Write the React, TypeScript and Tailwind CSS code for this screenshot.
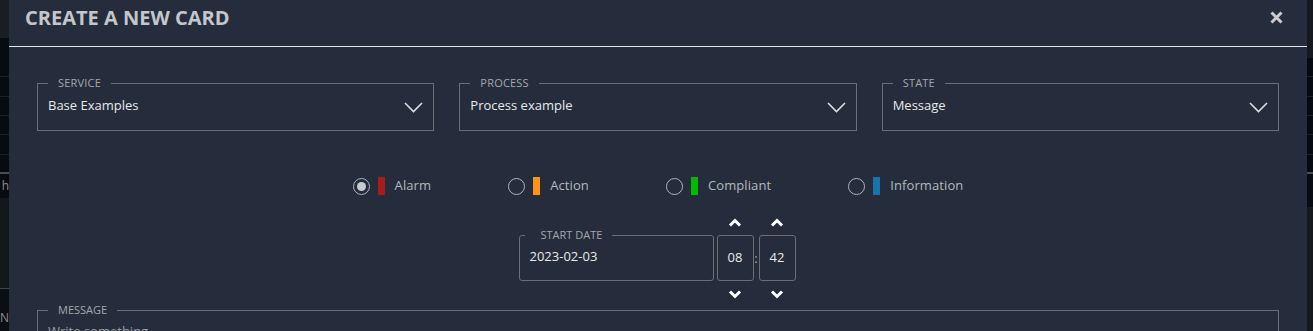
import React from "react";

const font = { fontFamily: '"Open Sans", "Noto Sans", sans-serif' };

function Chevron() {
  return (
    <svg width="19" height="11" viewBox="0 0 19 11" className="shrink-0 mt-[4px]">
      <polyline points="1,1 9.5,9.5 18,1" fill="none" stroke="#dcdde0" strokeWidth="1.6" />
    </svg>
  );
}

function SelectField({ label, value }: { label: string; value: string }) {
  return (
    <fieldset className="border border-[#6a6e75] pl-[10px] pr-[10px] pb-[10px] min-w-0">
      <legend className="px-[10px] text-[11px] leading-[14px] text-[#a3a7ad] tracking-[0.2px]">{label}</legend>
      <div className="h-[30px] flex items-center justify-between">
        <span className="text-[13px] text-[#e8e9eb] mt-[1px]">{value}</span>
        <Chevron />
      </div>
    </fieldset>
  );
}

function Radio({ checked, color, label }: { checked?: boolean; color: string; label: string }) {
  return (
    <div className="flex items-center h-[20px]">
      <div className="w-[17px] h-[17px] rounded-full border-[1.5px] border-[#b0b3b8] flex items-center justify-center">
        {checked && <div className="w-[9px] h-[9px] rounded-full bg-[#c9cbce]" />}
      </div>
      <div className="ml-[8px] w-[7px] h-[18px]" style={{ backgroundColor: color }} />
      <span className="ml-[10px] text-[13px] text-[#b4b8be] tracking-[0.1px]">{label}</span>
    </div>
  );
}

function ArrowUp() {
  return (
    <svg width="14" height="9" viewBox="0 0 14 9">
      <polyline points="2,7.5 7,2.5 12,7.5" fill="none" stroke="#ffffff" strokeWidth="3" />
    </svg>
  );
}

function ArrowDown() {
  return (
    <svg width="14" height="9" viewBox="0 0 14 9">
      <polyline points="2,1.5 7,6.5 12,1.5" fill="none" stroke="#ffffff" strokeWidth="3" />
    </svg>
  );
}

function TimeBox({ value }: { value: string }) {
  return (
    <div className="flex flex-col items-center w-[37px]">
      <div className="h-[24px] flex items-center justify-center pb-[1px]">
        <ArrowUp />
      </div>
      <div className="w-[37px] h-[46px] border border-[#6a6e75] rounded-[3px] flex items-center justify-center text-[13px] text-[#e8e9eb]">
        {value}
      </div>
      <div className="h-[24px] flex items-center justify-center pt-[2px]">
        <ArrowDown />
      </div>
    </div>
  );
}

function LeftStrip() {
  return (
    <div className="w-[9px] shrink-0 flex flex-col overflow-hidden">
      <div className="h-[38px] shrink-0 bg-[#1a1d23]" />
      <div className="h-[39px] shrink-0 bg-[#080b12] border-b border-[#1c2029]" />
      <div className="h-[20px] shrink-0 bg-[#080b12] border-b border-[#1c2029]" />
      <div className="h-[19px] shrink-0 bg-[#080b12] border-b border-[#1c2029]" />
      <div className="h-[19px] shrink-0 bg-[#080b12] border-b border-[#1c2029]" />
      <div className="h-[20px] shrink-0 bg-[#080b12] border-b border-[#1c2029]" />
      <div className="h-[17px] shrink-0 bg-[#080b12]" />
      <div className="h-[2px] shrink-0 bg-[#4a4d52]" />
      <div className="h-[24px] shrink-0 bg-[#080b12] text-[12px] leading-[24px] text-[#8a8d92] whitespace-nowrap flex justify-end">
        <span>h</span>
      </div>
      <div className="h-[90px] shrink-0 bg-[#14171c]" />
      <div className="h-[1px] shrink-0 bg-[#44474c]" />
      <div className="flex-1 bg-[#0b0e14] text-[12px] text-[#8a8d92] whitespace-nowrap pt-[20px] flex justify-end">
        <span>EN</span>
      </div>
    </div>
  );
}

function RightStrip() {
  return (
    <div className="flex-1 flex flex-col overflow-hidden">
      <div className="h-[58px] shrink-0 bg-[#15181e]" />
      <div className="h-[19px] shrink-0 bg-[#060a10] border-b border-[#1c2029]" />
      <div className="h-[20px] shrink-0 bg-[#060a10] border-b border-[#1c2029]" />
      <div className="h-[19px] shrink-0 bg-[#060a10] border-b border-[#1c2029]" />
      <div className="h-[19px] shrink-0 bg-[#060a10] border-b border-[#1c2029]" />
      <div className="h-[20px] shrink-0 bg-[#060a10] border-b border-[#1c2029]" />
      <div className="h-[17px] shrink-0 bg-[#060a10]" />
      <div className="h-[2px] shrink-0 bg-[#4a4d52]" />
      <div className="h-[33px] shrink-0 bg-[#080b12]" />
      <div className="flex-1 bg-[#15181d]" />
    </div>
  );
}

export default function App() {
  return (
    <div className="w-[1313px] h-[331px] flex overflow-hidden bg-[#0b0e14]" style={font}>
      <LeftStrip />
      <div className="w-[1298px] shrink-0 bg-[#252d3c] flex flex-col overflow-hidden">
        <div className="h-[47px] shrink-0 border-b border-[#e4e5e7] flex items-center justify-between pl-4 pr-[24px]">
          <h1 className="text-[20px] font-bold text-[#c3c7cd] tracking-[0px] mt-[-10px]">CREATE A NEW CARD</h1>
          <svg width="13" height="13" viewBox="0 0 13 13" className="mt-[-12px]">
            <path d="M1.5 1.5 L11.5 11.5 M11.5 1.5 L1.5 11.5" stroke="#c9cbcf" strokeWidth="3" />
          </svg>
        </div>
        <div className="shrink-0 px-[28px] pt-[29px] flex flex-col">
          <div className="grid grid-cols-3 gap-[25px]">
            <SelectField label="SERVICE" value="Base Examples" />
            <SelectField label="PROCESS" value="Process example" />
            <SelectField label="STATE" value="Message" />
          </div>

          <div className="mt-[45px] flex justify-center gap-[77px]">
            <Radio checked color="#a81c1c" label="Alarm" />
            <Radio color="#fd9414" label="Action" />
            <Radio color="#00bb03" label="Compliant" />
            <Radio color="#1574b0" label="Information" />
          </div>

          <div className="mt-[15px] flex justify-center items-start pr-[2px]">
            <fieldset className="mt-[17px] w-[195px] border border-[#6a6e75] rounded-[3px] pl-[10px] pr-[10px] pb-[8px]">
              <legend className="ml-[-5px] pl-[16px] pr-[10px] text-[11px] leading-[14px] text-[#a3a7ad]">START DATE</legend>
              <div className="h-[30px] flex items-center text-[13px] text-[#e8e9eb]">2023-02-03</div>
            </fieldset>
            <div className="ml-[3px]">
              <TimeBox value="08" />
            </div>
            <div className="w-[5px] h-[46px] mt-[24px] flex items-center justify-center text-[13px] text-[#a3a7ad] pt-[2px]">:</div>
            <TimeBox value="42" />
          </div>

          <fieldset className="mt-[-2px] border border-[#6a6e75] pl-[10px] pr-[10px] h-[60px]">
            <legend className="px-[10px] text-[11px] leading-[14px] text-[#a3a7ad]">MESSAGE</legend>
            <div className="pt-[4px] text-[13px] leading-[20px] text-[#9a9ea5]">Write something</div>
          </fieldset>
        </div>
      </div>
      <RightStrip />
    </div>
  );
}
